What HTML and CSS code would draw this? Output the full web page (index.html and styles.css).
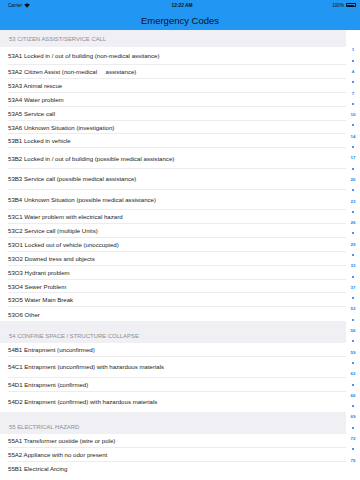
FILE: index.html
```html
<!DOCTYPE html>
<html lang="en">
<head>
    <meta charset="UTF-8">
    <meta name="viewport" content="width=device-width, initial-scale=1.0">
    <title>Emergency Codes</title>
    <link rel="stylesheet" href="styles.css">
</head>
<body>

    <header class="topbar">
        <div class="status-bar">
            <div class="status-left">
                Carrier
                <svg class="wifi" width="6" height="5" viewBox="0 0 12 9">
                    <path d="M6 9 L0.5 3 A8 8 0 0 1 11.5 3 Z" fill="#111"/>
                </svg>
            </div>
            <div class="status-time">12:22 AM</div>
            <div class="status-right">
                100%
                <span class="battery"><span class="battery-fill"></span></span>
            </div>
        </div>
        <div class="nav-bar">
            <h1>Emergency Codes</h1>
        </div>
    </header>

    <div class="content">
        <div class="code-table">
            <section>
                <div class="section-header first">53 CITIZEN ASSIST/SERVICE CALL</div>
                <div class="row first">53A1 Locked in / out of building (non-medical assitance)</div>
                <div class="row">53A2 Citizen Assist (non-medical&nbsp;&nbsp;&nbsp;&nbsp;&nbsp;assistance)</div>
                <div class="row">53A3 Animal rescue</div>
                <div class="row">53A4 Water problem</div>
                <div class="row">53A5 Service call</div>
                <div class="row">53A6 Unknown Situation (investigation)</div>
                <div class="row">53B1 Locked in vehicle</div>
                <div class="row tall">53B2 Locked in / out of building (possible medical assistance)</div>
                <div class="row tall">53B3 Service call (possible medical assistance)</div>
                <div class="row tall">53B4 Unknown Situation (possible medical assistance)</div>
                <div class="row">53C1 Water problem with electrical hazard</div>
                <div class="row">53C2 Service call (multiple Units)</div>
                <div class="row">53O1 Locked out of vehicle (unoccupied)</div>
                <div class="row">53O2 Downed tress and objects</div>
                <div class="row">53O3 Hydrant problem</div>
                <div class="row">53O4 Sewer Problem</div>
                <div class="row">53O5 Water Main Break</div>
                <div class="row">53O6 Other</div>
            </section>
            <section>
                <div class="section-header">54 CONFINE SPACE / STRUCTURE COLLAPSE</div>
                <div class="row">54B1 Entrapment (unconfirmed)</div>
                <div class="row tall">54C1 Entrapment (unconfirmed) with hazardous materials</div>
                <div class="row">54D1 Entrapment (confirmed)</div>
                <div class="row tall">54D2 Entrapment (confirmed) with hazardous materials</div>
            </section>
            <section>
                <div class="section-header">55 ELECTRICAL HAZARD</div>
                <div class="row">55A1 Transformer oustide (wire or pole)</div>
                <div class="row">55A2 Appliance with no odor present</div>
                <div class="row">55B1 Electrical Arcing</div>
            </section>
        </div>

        <div class="section-index" id="section-index">
            <!-- index labels get filled in by the script below -->
        </div>
    </div>

    <script>
        const labels = ['1', '4', '7', '10', '14', '17', '20', '23', '26', '29',
                        '33', '37', '53', '56', '59', '62', '66', '69', '72', '75'];
        const index = document.getElementById('section-index');

        labels.forEach((label, i) => {
            if (i > 0) {
                const dot = document.createElement('div');
                dot.className = 'index-item';
                dot.innerHTML = '<span class="index-dot"></span>';
                index.appendChild(dot);
            }
            const item = document.createElement('div');
            item.className = 'index-item';
            item.textContent = label;
            index.appendChild(item);
        });
    </script>
</body>
</html>
```

FILE: styles.css
```css
* {
    box-sizing: border-box;
    margin: 0;
    padding: 0;
}

body {
    font-family: 'Liberation Sans', Arial, sans-serif;
    background: #fff;
    color: #1c1c1c;
    width: 360px;
    height: 480px;
    overflow: hidden;
}

/* blue top area */
.topbar {
    background: #2196f3;
    height: 30px;
}

.status-bar {
    height: 10px;
    display: flex;
    align-items: center;
    justify-content: space-between;
    padding: 0 4px 0 8px;
    font-size: 4.6px;
    color: #111;
}

.status-left,
.status-right {
    display: flex;
    align-items: center;
    gap: 2px;
    width: 60px;
}

.status-right {
    justify-content: flex-end;
}

.status-time {
    font-weight: bold;
    font-size: 4.8px;
}

.battery {
    width: 10px;
    height: 4px;
    border: 0.6px solid #111;
    border-radius: 0.8px;
    padding: 0.5px;
    display: flex;
}

.battery-fill {
    flex: 1;
    background: #111;
}

.nav-bar {
    height: 20px;
    display: flex;
    align-items: center;
    justify-content: center;
}

.nav-bar h1 {
    font-size: 9.5px;
    font-weight: normal;
    color: #111;
}

/* list */
.content {
    display: flex;
    height: 450px;
}

.code-table {
    width: 346px;
    overflow: hidden;
}

.section-header {
    height: 22px;
    background: #efeff4;
    color: #8e8e93;
    font-size: 5.9px;
    padding: 7px 0 0 9px;
    display: flex;
    align-items: center;
}

.section-header.first {
    height: 17px;
    padding-top: 1px;
}

.row {
    height: 13.9px;
    margin-left: 8px;
    border-bottom: 1px solid #ececef;
    font-size: 6.1px;
    display: flex;
    align-items: center;
    white-space: nowrap;
}

.row.first {
    height: 18px;
}

.row.tall {
    height: 20.6px;
}

section .row:last-child {
    border-bottom: none;
}

/* side index */
.section-index {
    flex: 1;
    display: flex;
    flex-direction: column;
    justify-content: center;
    align-items: center;
}

.index-item {
    height: 10.8px;
    display: flex;
    align-items: center;
    justify-content: center;
    font-size: 4.4px;
    font-weight: bold;
    color: #1a7cf5;
}

.index-dot {
    width: 2px;
    height: 2px;
    border-radius: 50%;
    background: #1a6cf5;
}
```
